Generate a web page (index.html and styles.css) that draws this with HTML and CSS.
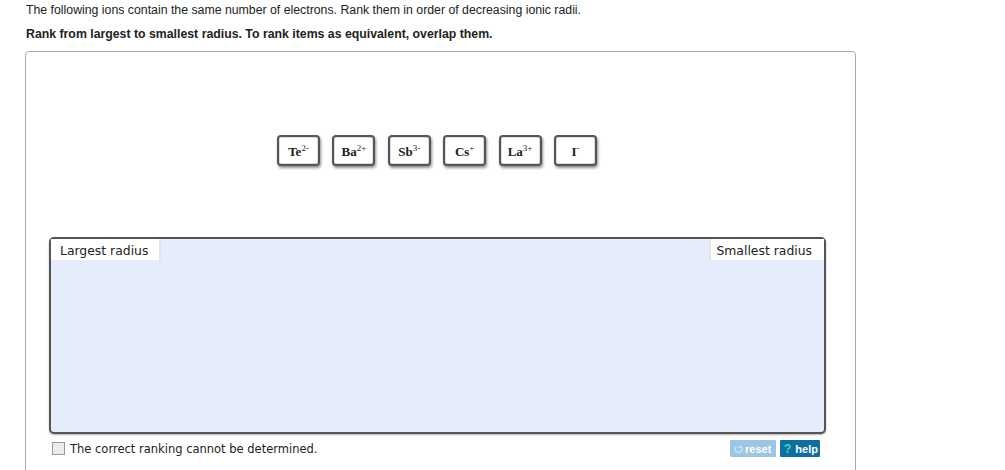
FILE: index.html
```html
<!DOCTYPE html>
<html>
<head>
<meta charset="utf-8">
<link rel="stylesheet" href="styles.css">
</head>
<body>
<div class="page">
  <p class="intro">The following ions contain the same number of electrons. Rank them in order of decreasing ionic radii.</p>
  <p class="instr">Rank from largest to smallest radius. To rank items as equivalent, overlap them.</p>
  <div class="outer">
    <div class="tiles">
      <div class="tile"><span>Te<sup>2-</sup></span></div>
      <div class="tile"><span>Ba<sup>2+</sup></span></div>
      <div class="tile"><span>Sb<sup>3-</sup></span></div>
      <div class="tile"><span>Cs<sup>+</sup></span></div>
      <div class="tile"><span>La<sup>3+</sup></span></div>
      <div class="tile"><span>I<sup>-</sup></span></div>
    </div>
    <div class="rankbox">
      <div class="labels">
        <span class="lab left">Largest radius</span>
        <span class="lab right">Smallest radius</span>
      </div>
    </div>
    <div class="footer">
      <label class="cant"><span class="cb"></span>The correct ranking cannot be determined.</label>
      <div class="btns">
        <span class="btn reset"><svg width="9" height="10" viewBox="0 0 9 10"><path d="M2.2 2.6 A3.4 3.4 0 1 0 6.8 2.6" fill="none" stroke="#c4e4f7" stroke-width="1.6"/><path d="M6.8 0.8 L6.8 3.4 L4.3 3.4" fill="none" stroke="#c4e4f7" stroke-width="1.3"/></svg>reset</span>
        <span class="btn help"><span class="q">?</span>help</span>
      </div>
    </div>
  </div>
</div>
</body>
</html>
```
FILE: styles.css
```css
html, body {
  margin: 0;
  padding: 0;
  background: #fff;
}
.page {
  padding: 3px 0 0 26px;
  width: 840px;
  font-family: "Liberation Sans", Arial, sans-serif;
  color: #222;
}
.intro {
  margin: 0;
  font-size: 12.3px;
  line-height: 15px;
}
.instr {
  margin: 9px 0 0 0;
  font-size: 12.3px;
  line-height: 15px;
  font-weight: bold;
}
.outer {
  margin: 9px 0 0 -1px;
  width: 831px;
  height: 430px;
  border: 1px solid #aaa;
  border-radius: 4px;
  box-sizing: border-box;
  padding: 83px 0 0 23px;
}
.tiles {
  display: flex;
  gap: 12.4px;
  padding-left: 228px;
}
.tile {
  width: 43px;
  height: 31px;
  box-sizing: border-box;
  border: 2px solid #555;
  border-radius: 4px;
  background: #fff;
  box-shadow: 1px 2px 3px rgba(0,0,0,0.45), inset 0 0 0 1px #ddd;
  font-family: "Liberation Serif", "Times New Roman", serif;
  font-weight: bold;
  font-size: 13px;
  color: #222;
  display: flex;
  align-items: center;
  justify-content: center;
  padding-top: 3px;
}
.tile sup {
  font-size: 9px;
  vertical-align: 5px;
  line-height: 0;
  font-weight: normal;
}
.rankbox {
  margin-top: 71px;
  width: 777px;
  height: 197px;
  box-sizing: border-box;
  border: 2px solid #555;
  border-radius: 5px;
  background: #e5edfd;
  box-shadow: 0 1px 2px rgba(0,0,0,0.3);
}
.labels {
  display: flex;
  justify-content: space-between;
}
.lab {
  background: #fff;
  font-family: "DejaVu Sans", Verdana, sans-serif;
  font-size: 12.4px;
  line-height: 15px;
  padding-top: 4px;
  padding-bottom: 2px;
  color: #222;
}
.lab.left {
  padding-left: 9px;
  border-right: 2px solid #e4e4e4;
  box-sizing: border-box;
  width: 110px;
}
.lab.right {
  border-left: 2px solid #e4e4e4;
  padding-left: 5px;
  padding-right: 12px;
}
.footer {
  display: flex;
  justify-content: space-between;
  align-items: center;
  width: 777px;
  margin-top: 6px;
}
.cant {
  display: flex;
  align-items: center;
  font-family: "DejaVu Sans", Verdana, sans-serif;
  font-size: 11.5px;
  color: #222;
  padding-left: 3px;
}
.cb {
  width: 11px;
  height: 11px;
  border: 1px solid #999;
  background: #ececec;
  margin-right: 5px;
}
.btns {
  display: flex;
  gap: 4px;
  padding-right: 6px;
}
.btn {
  display: flex;
  align-items: center;
  gap: 2px;
  height: 17px;
  box-sizing: border-box;
  padding: 0 4px;
  font-family: "Liberation Sans", Arial, sans-serif;
  font-weight: bold;
  font-size: 11px;
  color: #fff;
  border-radius: 1px;
}
.btn.reset {
  background: #9cc6e6;
  width: 46px;
}
.btn.help {
  background: #0d6ea4;
  width: 40px;
}
.q {
  color: #3be0a3;
  font-size: 12px;
  margin-right: 2px;
}
```
